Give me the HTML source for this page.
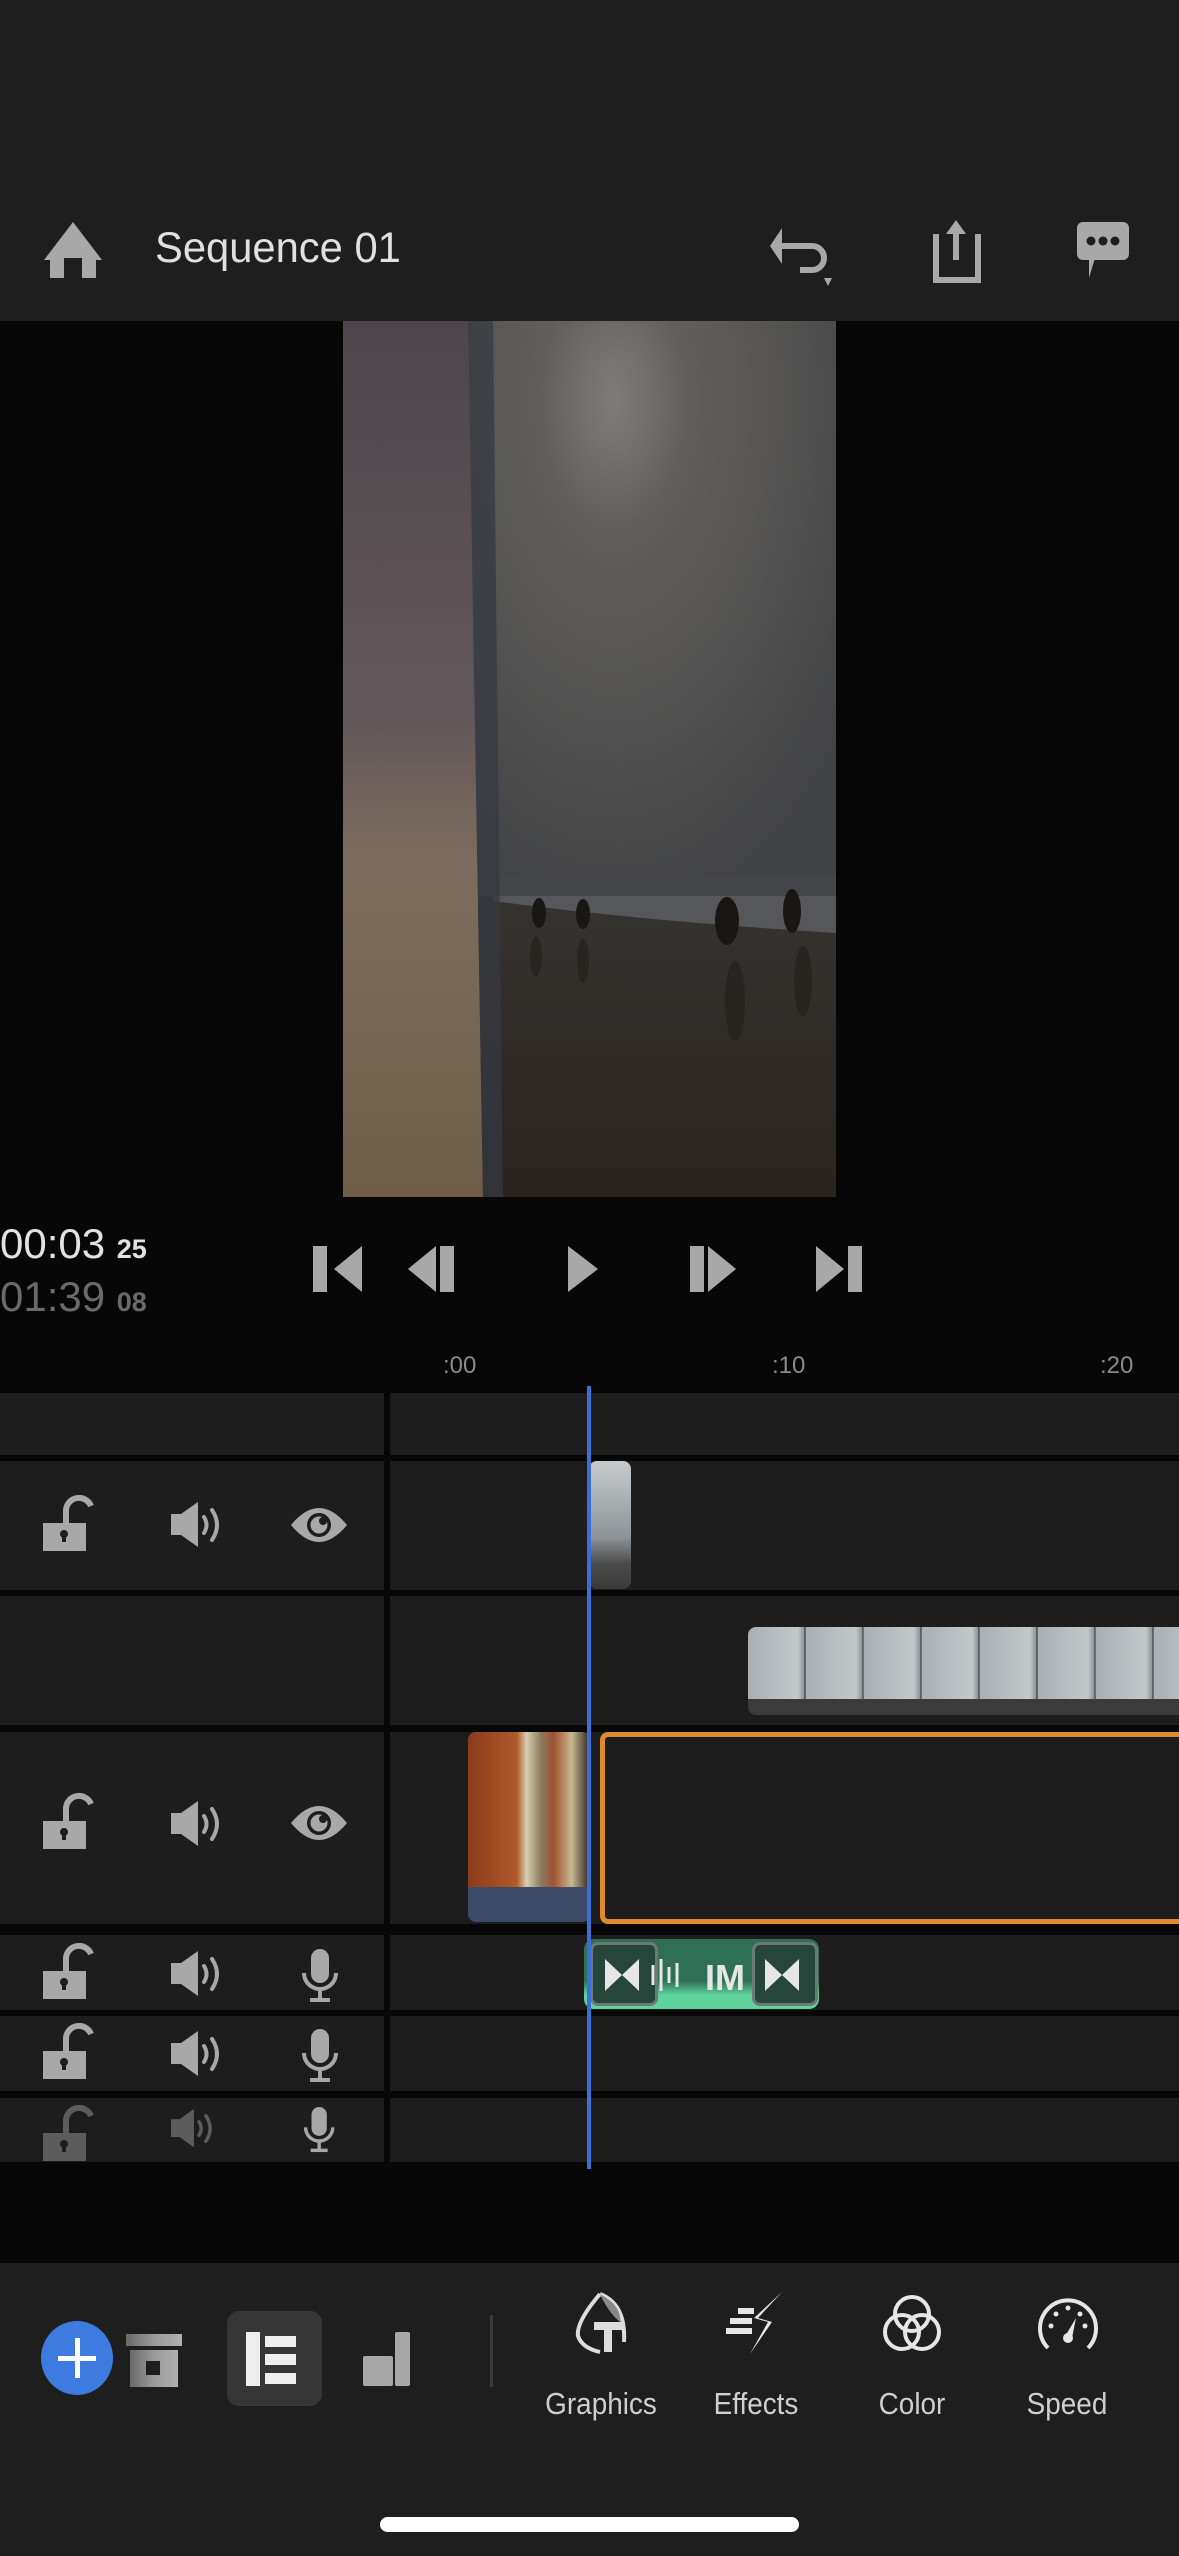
<!DOCTYPE html>
<html><head><meta charset="utf-8"><style>
*{margin:0;padding:0;box-sizing:border-box}
body{width:1179px;height:2556px;background:#070707;position:relative;overflow:hidden;font-family:"Liberation Sans",sans-serif}
.a{position:absolute}
.row{position:absolute;left:0;width:1179px;background:#1d1d1d}
.hd{position:absolute;left:384px;width:6px;background:#070707}
.lbl{position:absolute;top:2386px;color:#cfcfcf;font-size:31px;transform:translateX(-50%) scaleX(.9);white-space:nowrap}
</style></head><body>
<div class="a" style="left:0;top:0;width:1179px;height:321px;background:#1e1e1e"></div>
<svg class="a" style="left:42px;top:222px" width="62" height="56" viewBox="0 0 62 56"><path d="M31 0 L60 38 L54 38 L54 56 L40 56 L40 36 L22 36 L22 56 L8 56 L8 38 L2 38Z" fill="#a8a8a8"/></svg>
<div class="a" style="left:155px;top:224px;color:#e0e0e0;font-size:43px;transform:scaleX(.97);transform-origin:left">Sequence 01</div>
<svg class="a" style="left:770px;top:226px" width="70" height="60" viewBox="0 0 70 60"><path d="M12 20 H42 a12 12 0 0 1 0 24 H30" stroke="#a8a8a8" stroke-width="6" fill="none"/><path d="M0 20 L12 2 V38Z" fill="#a8a8a8"/><path d="M54 52 L62 52 L58 60Z" fill="#a8a8a8"/></svg>
<svg class="a" style="left:928px;top:220px" width="56" height="64" viewBox="0 0 56 64"><path d="M8 14 V60 H50 V14" stroke="#a8a8a8" stroke-width="6" fill="none"/><path d="M28 0 L38 14 H31 V40 H25 V14 H18Z" fill="#a8a8a8"/></svg>
<svg class="a" style="left:1077px;top:222px" width="52" height="64" viewBox="0 0 52 64"><rect x="0" y="0" width="52" height="38" rx="6" fill="#a8a8a8"/><path d="M12 36 L18 36 L12 56Z" fill="#a8a8a8"/><circle cx="14" cy="19" r="4.5" fill="#1e1e1e"/><circle cx="26" cy="19" r="4.5" fill="#1e1e1e"/><circle cx="38" cy="19" r="4.5" fill="#1e1e1e"/></svg>

<svg class="a" style="left:343px;top:321px" width="493" height="876" viewBox="0 0 493 876">
<defs>
<radialGradient id="sun" cx="0.55" cy="0.09" r="0.6"><stop offset="0" stop-color="#7e7d7a"/><stop offset=".25" stop-color="#615f5c"/><stop offset="1" stop-color="#424345"/></radialGradient>
<linearGradient id="lp" x1="0" y1="0" x2="0" y2="1"><stop offset="0" stop-color="#4e464c"/><stop offset=".45" stop-color="#62575a"/><stop offset=".62" stop-color="#7d6d5e"/><stop offset="1" stop-color="#6f5e48"/></linearGradient>
<linearGradient id="sand" x1="0" y1="0" x2="0" y2="1"><stop offset="0" stop-color="#363431"/><stop offset="1" stop-color="#2a231e"/></linearGradient>
</defs>
<rect width="493" height="876" fill="url(#sun)"/>
<rect y="565" width="493" height="311" fill="url(#sand)"/>
<rect y="555" width="493" height="20" fill="#444649"/>
<path d="M150 580 Q300 600 493 612 L493 575 L150 575Z" fill="#55575a"/>
<g fill="#1a1613"><ellipse cx="196" cy="592" rx="7" ry="15"/><ellipse cx="240" cy="593" rx="7" ry="15"/><ellipse cx="384" cy="600" rx="12" ry="24"/><ellipse cx="449" cy="590" rx="9" ry="22"/></g>
<g fill="#27211c" opacity=".7"><ellipse cx="193" cy="635" rx="6" ry="20"/><ellipse cx="240" cy="640" rx="6" ry="22"/><ellipse cx="392" cy="680" rx="10" ry="40"/><ellipse cx="460" cy="660" rx="9" ry="35"/></g>
<path d="M0 0 H125 L140 876 H0Z" fill="url(#lp)"/>
<path d="M125 0 H150 L160 876 H140Z" fill="#353a41" opacity=".75"/>
</svg>

<div class="a" style="left:0;top:1220px;color:#e2e2e2;font-size:42px">00:03 <span style="font-size:27px;font-weight:bold">25</span></div>
<div class="a" style="left:0;top:1273px;color:#6a6a6a;font-size:42px">01:39 <span style="font-size:27px;font-weight:bold">08</span></div>
<svg class="a" style="left:300px;top:1245px" width="580" height="48" viewBox="0 0 580 48"><g fill="#a8a8a8">
<rect x="13" y="1" width="14" height="46"/><path d="M62 1 V47 L34 24Z"/>
<path d="M136 1 V47 L108 24Z"/><rect x="140" y="1" width="14" height="46"/>
<path d="M268 1 L298 24 L268 47Z"/>
<rect x="390" y="1" width="14" height="46"/><path d="M408 1 L436 24 L408 47Z"/>
<path d="M516 1 L544 24 L516 47Z"/><rect x="548" y="1" width="14" height="46"/>
</g></svg>

<div class="a" style="left:443px;top:1352px;color:#8a8a8a;font-size:24px">:00</div>
<div class="a" style="left:772px;top:1352px;color:#8a8a8a;font-size:24px">:10</div>
<div class="a" style="left:1100px;top:1352px;color:#8a8a8a;font-size:24px">:20</div>

<div class="row" style="top:1393px;height:62px"></div>
<div class="row" style="top:1461px;height:129px"></div>
<div class="row" style="top:1596px;height:129px"></div>
<div class="row" style="top:1732px;height:192px"></div>
<div class="row" style="top:1935px;height:75px"></div>
<div class="row" style="top:2016px;height:75px"></div>
<div class="row" style="top:2098px;height:64px"></div>
<div class="hd" style="top:1393px;height:769px"></div>

<svg class="a" style="left:0;top:1461px" width="384" height="701" viewBox="0 0 384 701">
<defs>
<g id="lk"><path d="M23 30 V17 a13 13 0 0 1 25 -4" stroke="currentColor" stroke-width="6" fill="none"/><rect x="0" y="30" width="43" height="28" fill="currentColor"/><circle cx="21" cy="41" r="4" fill="#1d1d1d"/><rect x="19" y="41" width="4" height="8" fill="#1d1d1d"/></g>
<g id="sp"><path d="M0 12 H10 L27 0 V45 L10 33 H0Z" fill="currentColor"/><path d="M33 15 q5 8 0 16" stroke="currentColor" stroke-width="4" fill="none" stroke-linecap="round"/><path d="M41 8 q10 15 0 30" stroke="currentColor" stroke-width="4" fill="none" stroke-linecap="round"/></g>
<g id="ey"><path d="M0 20 Q28 -14 56 20 Q28 54 0 20Z" fill="currentColor"/><circle cx="28" cy="20" r="12" fill="#1d1d1d"/><circle cx="28" cy="20" r="8.5" fill="currentColor"/><circle cx="32" cy="16" r="4" fill="#1d1d1d"/></g>
<g id="mc"><rect x="10" y="0" width="18" height="34" rx="9" fill="currentColor"/><path d="M3 24 a16 16 0 0 0 32 0" stroke="currentColor" stroke-width="4" fill="none"/><rect x="17" y="40" width="4" height="10" fill="currentColor"/><rect x="9" y="49" width="20" height="4" fill="currentColor"/></g>
</defs>
<g color="#a8a8a8">
<use href="#lk" x="43" y="32"/><use href="#sp" x="171" y="41"/><use href="#ey" x="291" y="44"/>
<use href="#lk" x="43" y="330"/><use href="#sp" x="171" y="340"/><use href="#ey" x="291" y="342"/>
<use href="#lk" x="43" y="480"/><use href="#sp" x="171" y="490"/><use href="#mc" x="301" y="488"/>
<use href="#lk" x="43" y="560"/><use href="#sp" x="171" y="570"/><use href="#mc" x="301" y="568"/>
</g>
<g color="#5c5c5c"><use href="#lk" x="43" y="642"/><g transform="translate(171 648) scale(.85)"><use href="#sp"/></g></g>
<g color="#a8a8a8"><g transform="translate(303 646) scale(.85)"><use href="#mc"/></g></g>
</svg>

<div class="a" style="left:589px;top:1461px;width:42px;height:128px;border-radius:8px;background:linear-gradient(#c8ccce,#8d9296 60%,#4c4c4c 80%,#3a3a3a);"></div>
<div class="a" style="left:748px;top:1627px;width:440px;height:88px;border-radius:8px 0 0 8px;background:#3b3b3b;overflow:hidden">
<div style="height:72px;background:repeating-linear-gradient(90deg,#a9afb3 0,#c3c8cb 50px,#8d9398 56px,#2c2c2c 57px,#a9afb3 58px)"></div></div>
<div class="a" style="left:468px;top:1732px;width:122px;height:190px;border-radius:8px;overflow:hidden;background:#3c4c68">
<div style="height:155px;background:linear-gradient(90deg,#8b3a1a 0,#b05a2a 40%,#d8cfb0 48%,#8a7a60 60%,#a05030 70%,#c8b890 85%,#2c2420)"></div></div>
<div class="a" style="left:600px;top:1732px;width:600px;height:192px;border:5px solid #e08a2e;border-radius:8px;background:#1d1d1d"></div>
<div class="a" style="left:584px;top:1939px;width:235px;height:70px;border-radius:10px;background:linear-gradient(#2f6f55 60%,#5fd39d 80%)"></div>
<div class="a" style="left:590px;top:1942px;width:68px;height:64px;border-radius:8px;border:3px solid #6c7a74;background:#27463b"></div>
<div class="a" style="left:752px;top:1942px;width:66px;height:64px;border-radius:8px;border:3px solid #6c7a74;background:#27463b"></div>
<svg class="a" style="left:605px;top:1955px" width="200" height="40" viewBox="0 0 200 40"><g fill="#e6e6e6"><path d="M0 4 L17 20 L0 36Z M34 4 L17 20 L34 36Z"/><path d="M160 4 L177 20 L160 36Z M194 4 L177 20 L194 36Z"/></g><g stroke="#e6e6e6" stroke-width="3"><path d="M48 10V30M56 4V36M64 12V28M72 8V32"/></g><text x="100" y="35" fill="#e6e6e6" font-size="36" font-family="Liberation Sans" font-weight="bold">IM</text></svg>
<div class="a" style="left:587px;top:1386px;width:4px;height:783px;background:#3a6fd8"></div>

<div class="a" style="left:0;top:2263px;width:1179px;height:293px;background:#1e1e1e"></div>
<svg class="a" style="left:40px;top:2300px" width="420" height="120" viewBox="0 0 420 120">
<defs><linearGradient id="ar" x1="0" x2="1"><stop offset="0" stop-color="#6a6a6a"/><stop offset=".5" stop-color="#9a9a9a"/><stop offset="1" stop-color="#b0b0b0"/></linearGradient></defs>
<ellipse cx="37" cy="58" rx="36" ry="37" fill="#3e7be0"/><rect x="35" y="38" width="5" height="40" fill="#fff"/><rect x="18" y="56" width="38" height="5" fill="#fff"/>
<rect x="86" y="34" width="56" height="12" fill="url(#ar)"/><rect x="90" y="50" width="48" height="37" fill="url(#ar)"/><rect x="106" y="61" width="14" height="14" fill="#1e1e1e"/>
<rect x="187" y="11" width="95" height="95" rx="12" fill="#363636"/>
<rect x="206" y="32" width="14" height="54" fill="#eee"/><rect x="225" y="36" width="31" height="11" fill="#eee"/><rect x="225" y="54" width="31" height="11" fill="#eee"/><rect x="225" y="73" width="31" height="11" fill="#eee"/>
<rect x="355" y="32" width="15" height="54" rx="2" fill="#a8a8a8"/><rect x="323" y="56" width="30" height="30" rx="2" fill="#a8a8a8"/>
</svg>
<div class="a" style="left:490px;top:2315px;width:3px;height:72px;background:#3a3a3a"></div>
<svg class="a" style="left:570px;top:2292px" width="60" height="64" viewBox="0 0 60 64"><path d="M30 2 Q56 12 54 50 M30 2 Q6 30 8 44 Q12 56 30 60" stroke="#ddd" stroke-width="4" fill="none"/><path d="M30 2 Q52 14 50 30 Q38 20 30 2Z" fill="#888"/><path d="M24 30 H52 V38 H42 V60 H34 V38 H24Z" fill="#ddd"/></svg>
<svg class="a" style="left:724px;top:2292px" width="60" height="64" viewBox="0 0 60 64"><path d="M58 0 L34 26 L48 30 L26 62 L44 30 L30 26Z" fill="#e6e6e6"/><rect x="14" y="16" width="16" height="6" fill="#e6e6e6"/><rect x="6" y="26" width="22" height="6" fill="#e6e6e6"/><rect x="2" y="36" width="26" height="6" fill="#e6e6e6"/></svg>
<svg class="a" style="left:882px;top:2292px" width="60" height="64" viewBox="0 0 60 64"><g stroke="#e6e6e6" stroke-width="4" fill="none"><circle cx="30" cy="22" r="17"/><circle cx="20" cy="40" r="17"/><circle cx="40" cy="40" r="17"/></g></svg>
<svg class="a" style="left:1036px;top:2292px" width="64" height="64" viewBox="0 0 64 64"><path d="M12 56 A28 28 0 1 1 52 56" stroke="#e6e6e6" stroke-width="4" fill="none"/><path d="M40 26 L36 46 L28 46Z" fill="#e6e6e6"/><circle cx="32" cy="46" r="5" fill="#e6e6e6"/><g fill="#e6e6e6"><circle cx="20" cy="22" r="2.5"/><circle cx="32" cy="16" r="2.5"/><circle cx="44" cy="22" r="2.5"/><circle cx="15" cy="34" r="2.5"/><circle cx="49" cy="34" r="2.5"/></g></svg>
<div class="lbl" style="left:601px">Graphics</div>
<div class="lbl" style="left:756px">Effects</div>
<div class="lbl" style="left:912px">Color</div>
<div class="lbl" style="left:1067px">Speed</div>
<div class="a" style="left:380px;top:2517px;width:419px;height:15px;border-radius:8px;background:#fff"></div>
</body></html>
